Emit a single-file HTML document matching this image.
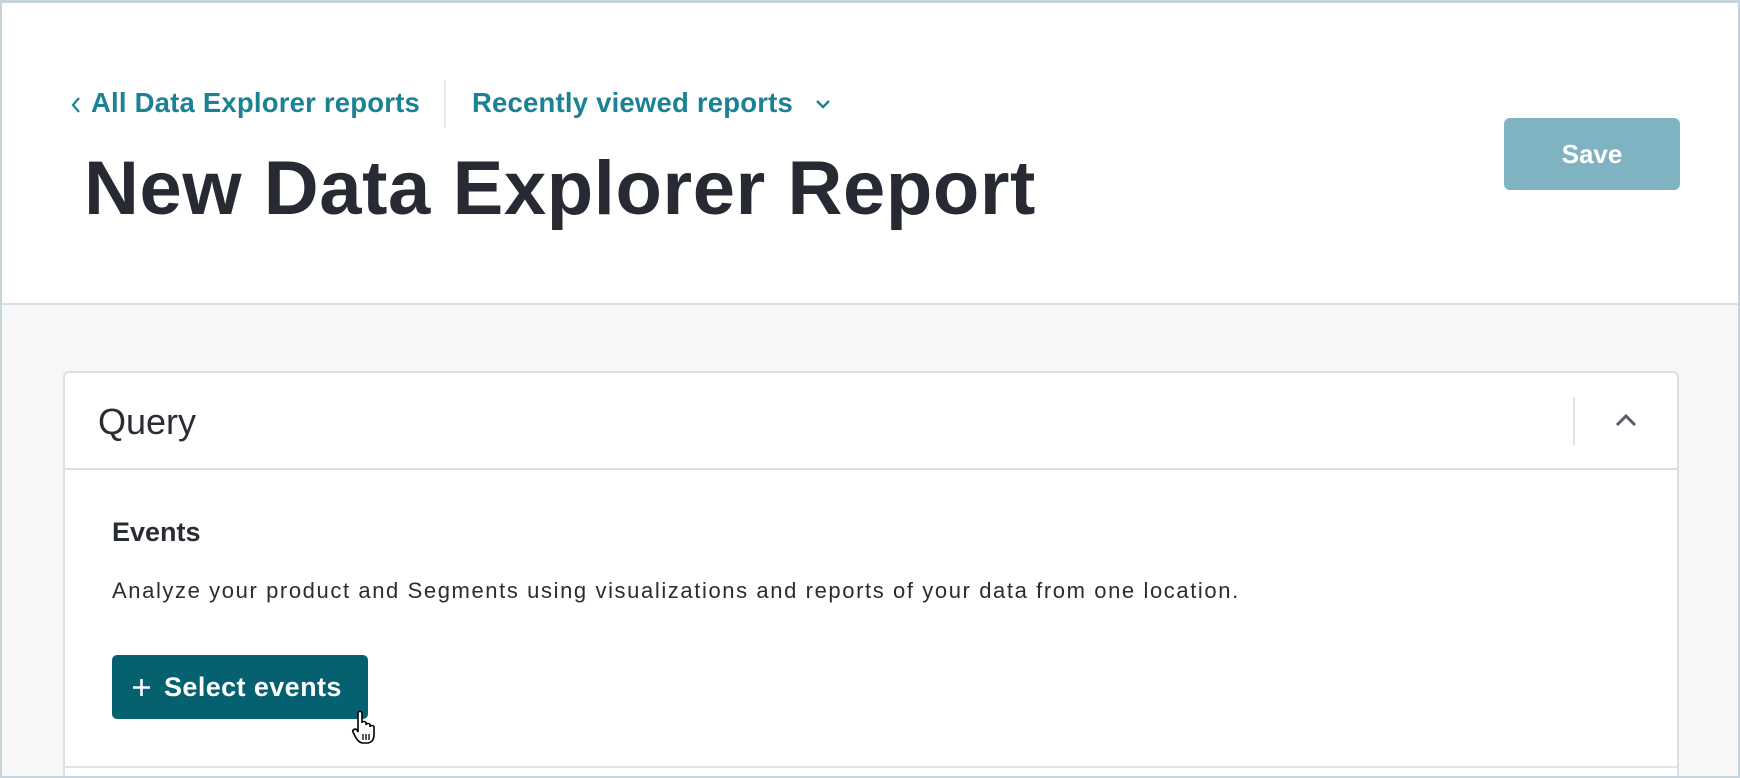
<!DOCTYPE html>
<html><head><meta charset="utf-8"><style>
*{margin:0;padding:0;box-sizing:border-box}
html,body{width:1740px;height:778px;overflow:hidden}
body{background:#f7f7f8;font-family:"Liberation Sans",sans-serif;position:relative}
.frame{position:absolute;left:0;top:0;width:1740px;height:778px;border:2px solid #c8d4dc;border-top-width:3px;pointer-events:none;z-index:10}
.header{position:absolute;left:0;top:0;width:1740px;height:305px;background:#fff;border-bottom:2px solid #dcdee6}
.crumb{position:absolute;top:87px;font-size:27.5px;color:#1b8294;font-weight:bold;white-space:nowrap;letter-spacing:0.2px}
.div{position:absolute;left:444px;top:80px;width:2px;height:48px;background:#e6e7ec}
h1{position:absolute;left:84px;top:145px;font-size:76px;font-weight:bold;color:#282a33;white-space:nowrap;letter-spacing:0.6px}
.save{position:absolute;left:1504px;top:118px;width:176px;height:72px;background:#7fb3c1;border-radius:6px;color:#fff;font-weight:bold;font-size:26px;text-align:center;line-height:72px}
.card{position:absolute;left:63px;top:371px;width:1616px;height:420px;background:#fff;border:2px solid #dcdee6;border-radius:6px;overflow:hidden}
.qh{position:absolute;left:0;top:0;width:100%;height:97px;border-bottom:2px solid #dcdee6}
.q{position:absolute;left:33px;top:28px;font-size:36px;color:#2a2c33}
.vd{position:absolute;left:1508px;top:24px;width:2px;height:48px;background:#e0e2e8}
.ev{position:absolute;left:47px;top:144px;font-size:27px;font-weight:bold;color:#2a2c33}
.desc{position:absolute;left:47px;top:205px;font-size:22px;color:#2a2c33;white-space:nowrap;letter-spacing:1.6px}
.btn{position:absolute;left:47px;top:282px;width:256px;height:64px;background:#05606f;border-radius:5px;color:#fff;font-weight:bold;font-size:27px;line-height:64px;padding-left:52px;white-space:nowrap;letter-spacing:0.4px}
.bl{position:absolute;left:0;top:393px;width:100%;height:2px;background:#e2e4ea}
</style></head><body>
<div class="header">
<svg style="position:absolute;left:70px;top:96px" width="12" height="18" viewBox="0 0 12 18"><path d="M9 2L3 9l6 7" fill="none" stroke="#1b8294" stroke-width="2.2"/></svg>
<div class="crumb" style="left:91px">All Data Explorer reports</div>
<div class="div"></div>
<div class="crumb" style="left:472px">Recently viewed reports</div>
<svg style="position:absolute;left:815px;top:98px" width="16" height="12" viewBox="0 0 16 12"><path d="M2 3l6 6 6-6" fill="none" stroke="#1b8294" stroke-width="2.4"/></svg>
<h1>New Data Explorer Report</h1>
<div class="save">Save</div>
</div>
<div class="card">
<div class="qh"><div class="q">Query</div><div class="vd"></div>
<svg style="position:absolute;left:1550px;top:40px" width="22" height="14" viewBox="0 0 22 14"><path d="M2 12l9-9 9 9" fill="none" stroke="#5a5d68" stroke-width="3"/></svg></div>
<div class="ev">Events</div>
<div class="desc">Analyze your product and Segments using visualizations and reports of your data from one location.</div>
<div class="btn"><svg style="position:absolute;left:20px;top:23px" width="19" height="19" viewBox="0 0 19 19"><path d="M9.5 1v17M1 9.5h17" stroke="#fff" stroke-width="2.6"/></svg>Select events</div>
<div class="bl"></div>
</div>
<svg style="position:absolute;left:350px;top:710px" width="30" height="36" viewBox="0 0 30 36"><path d="M8 3c0-2 4-2 4 0v10c0-2 4-2 4 0v2c0-2 4-2 4 0v2c0-2 4-2 4 0v8c0 5-3 8-7 8h-4c-3 0-5-2-7-5L3 22c-1-2 2-4 4-2l1 2z" fill="#fff" stroke="#000" stroke-width="1.6"/><path d="M13 24v6M16 24v6M19 24v6" stroke="#000" stroke-width="1.3"/></svg>
<div class="frame"></div>
</body></html>
